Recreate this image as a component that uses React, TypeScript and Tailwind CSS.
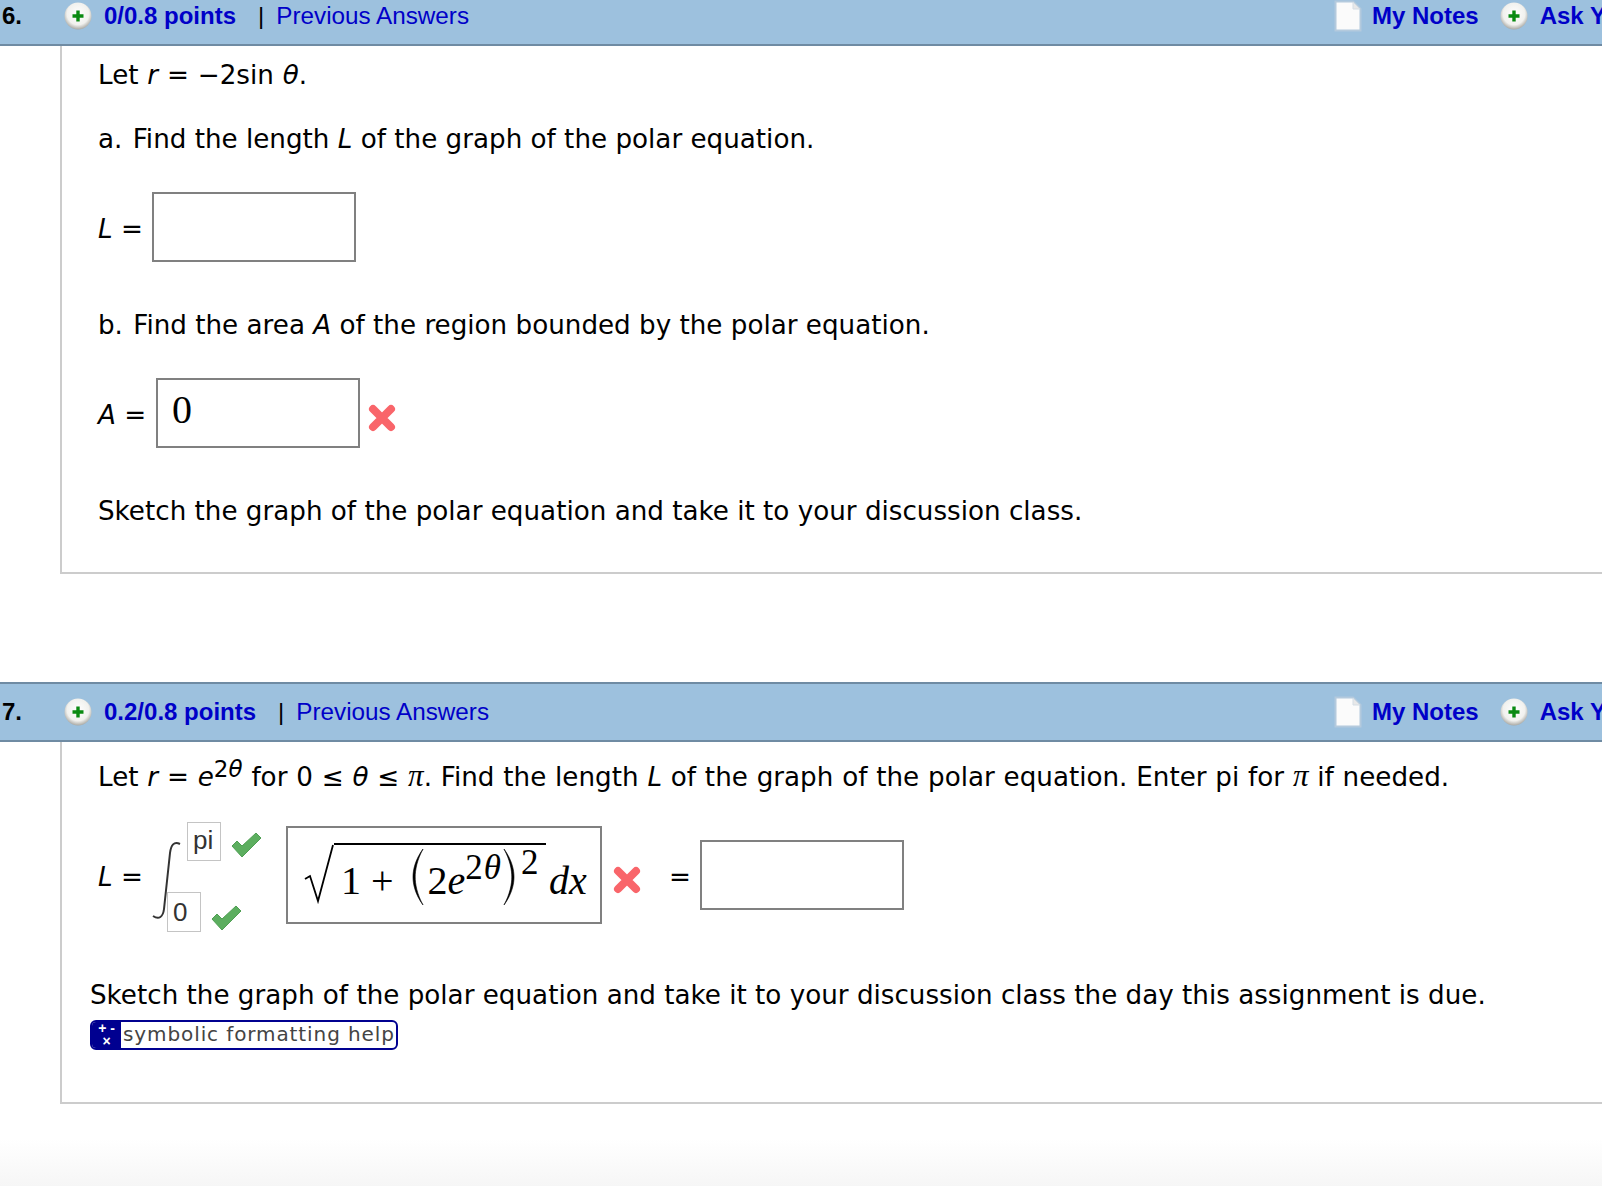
import React from "react";

const PlusBall = () => (
  <svg width="28" height="28" viewBox="0 0 28 28" className="shrink-0">
    <defs>
      <radialGradient id="ball" cx="50%" cy="42%" r="58%">
        <stop offset="0%" stopColor="#ffffff" />
        <stop offset="70%" stopColor="#f1f1ee" />
        <stop offset="100%" stopColor="#a9a9a4" />
      </radialGradient>
    </defs>
    <circle cx="14" cy="14" r="13.5" fill="url(#ball)" />
    <path d="M14 8.5v11M8.5 14h11" stroke="#0a8a12" strokeWidth="3.4" />
  </svg>
);

const NoteIcon = () => (
  <svg width="28" height="32" viewBox="0 0 28 32" className="shrink-0">
    <path d="M1.5 1.5H19L26.5 9V30.5H1.5Z" fill="#fbfbfb" stroke="#b4cadd" strokeWidth="2" />
    <path d="M19 2V9H26" fill="#e8e8e8" stroke="#d4dde5" strokeWidth="1" />
  </svg>
);

const Check = () => (
  <svg width="32" height="28" viewBox="0 0 32 28" className="shrink-0">
    <path d="M2 15L7 10L12 15L26 2L31 7L12 26Z" fill="#5cae5f" stroke="#4f9f53" strokeWidth="1" strokeLinejoin="round" />
  </svg>
);

const Cross = () => (
  <svg width="28" height="28" viewBox="0 0 28 28" className="shrink-0">
    <path d="M5 5L23 23M23 5L5 23" stroke="#f9656a" strokeWidth="8" strokeLinecap="round" />
  </svg>
);

const Header = ({ num, pts, cls, gap }: { num: string; pts: string; cls: string; gap: string }) => (
  <div className={`flex items-center bg-[#9dc1de] border-b-2 border-[#6f8ba3] font-['Liberation_Sans',sans-serif] text-[24px] leading-none overflow-hidden ${cls}`}>
    <b className="w-[64px] pl-[2px] text-black">{num}</b>
    <PlusBall />
    <b className="ml-[12px] text-[#0000c8]">{pts}</b>
    <span className={`text-black ${gap}`}>|</span>
    <span className="ml-[12px] text-[24.25px] text-[#0000c8]">Previous Answers</span>
    <div className="ml-auto flex items-center shrink-0 w-[268px] overflow-hidden whitespace-nowrap">
      <NoteIcon />
      <b className="ml-[10px] text-[#0000c8]">My Notes</b>
      <span className="ml-[21px]"><PlusBall /></span>
      <b className="ml-[12px] text-[#0000c8]">Ask Your Teacher</b>
    </div>
  </div>
);

const Box = ({ children, cls }: { children?: React.ReactNode; cls: string }) => (
  <div className={`border-2 border-[#808080] shrink-0 ${cls}`}>{children}</div>
);

const M = ({ children }: { children: React.ReactNode }) => <i className="font-['DejaVu_Sans',sans-serif]">{children}</i>;
const S = ({ children, cls = "" }: { children: React.ReactNode; cls?: string }) => (
  <span className={`font-['Liberation_Serif',serif] ${cls}`}>{children}</span>
);

const Paren = ({ flip = false }: { flip?: boolean }) => (
  <svg width="14" height="58" viewBox="0 0 14 58" className={`shrink-0 ${flip ? "-scale-x-100" : ""}`}>
    <path d="M12 1C4 12 2 22 2 29C2 36 4 46 12 57C6 46 4.2 36 4.2 29C4.2 22 6 12 12 1Z" fill="#000" stroke="#000" strokeWidth="0.6" />
  </svg>
);

export default function App() {
  return (
    <div className="w-[1602px] h-[1186px] overflow-hidden text-black font-['DejaVu_Sans',sans-serif] text-[26.2px] leading-[32px] bg-gradient-to-b from-white from-[96%] to-[#f6f6f6]">
      <Header num="6." pts="0/0.8 points" cls="h-[46px] pb-[12px]" gap="ml-[22px]" />
      <div className="ml-[60px] h-[528px] border-l-2 border-b-2 border-[#cccccc] pl-[36px] pt-[13px]">
        <p className="[word-spacing:0.5px]">Let <M>r</M> = −2sin <M>θ</M>.</p>
        <p className="mt-[32px]"><span className="mr-[2px]">a.</span> Find the length <M>L</M> of the graph of the polar equation.</p>
        <div className="mt-[37px] flex items-center h-[70px]">
          <span className="w-[54px] pt-[4px]"><M>L</M> =</span>
          <Box cls="w-[204px] h-[70px]" />
        </div>
        <p className="mt-[47px]"><span className="mr-[2px]">b.</span> Find the area <M>A</M> of the region bounded by the polar equation.</p>
        <div className="mt-[37px] flex items-center h-[70px]">
          <span className="w-[58px] pt-[4px]"><M>A</M> =</span>
          <Box cls="w-[204px] h-[70px] pl-[14px] pt-[4px]"><S cls="text-[40px] leading-[52px]">0</S></Box>
          <span className="ml-[8px] mt-[10px]"><Cross /></span>
        </div>
        <p className="mt-[47px]">Sketch the graph of the polar equation and take it to your discussion class.</p>
      </div>
      <div className="h-[108px]" />
      <div className="border-t-2 border-[#6f8ba3]">
        <Header num="7." pts="0.2/0.8 points" cls="h-[58px]" gap="ml-[22px]" />
      </div>
      <div className="ml-[60px] h-[362px] border-l-2 border-b-2 border-[#cccccc] pl-[36px] pt-[16px]">
        <p className="leading-[36px] whitespace-nowrap [word-spacing:0.5px]">
          Let <M>r</M> = <M>e</M>
          <sup className="text-[23px] leading-none top-[-9px]">2<M>θ</M></sup> for 0 ≤ <M>θ</M> ≤ <S cls="italic text-[31px]">π</S>. Find the length <M>L</M> of the graph of the polar equation. Enter pi for <S cls="italic text-[31px]">π</S> if needed.
        </p>
        <div className="mt-[31px] flex h-[114px]">
          <span className="w-[54px] pt-[35px]"><M>L</M> =</span>
          <div className="relative w-[134px]">
            <svg width="32" height="80" viewBox="0 0 32 80" className="absolute left-[-1px] top-[15px]">
              <path d="M29 3C23 0 20 4 19 12L13 68C12 76 8 79 2 75" fill="none" stroke="#333" strokeWidth="2" />
            </svg>
            <div className="absolute left-[35px] top-[-4px] w-[34px] h-[39px] border border-[#c4c4c4] pl-[5px] font-['Liberation_Sans',sans-serif] text-[26px] leading-[34px] text-[#333]">pi</div>
            <div className="absolute left-[78px] top-[5px]"><Check /></div>
            <div className="absolute left-[15px] top-[66px] w-[34px] h-[40px] border border-[#c4c4c4] pl-[5px] font-['Liberation_Sans',sans-serif] text-[26px] leading-[38px] text-[#333]">0</div>
            <div className="absolute left-[58px] top-[78px]"><Check /></div>
          </div>
          <Box cls="w-[316px] h-[98px] flex items-start pl-[16px] pt-[15px] font-['Liberation_Serif',serif] whitespace-nowrap text-[40px] leading-[60px]">
            <svg width="30" height="62" viewBox="0 0 30 62" className="shrink-0">
              <path d="M1 36L6 33L14 58L29 2" fill="none" stroke="#000" strokeWidth="1.8" />
            </svg>
            <div className="w-[212px] h-[60px] border-t-2 border-black flex items-baseline pl-[7px] pt-[6px]">
              <span>1</span>
              <span className="ml-[10px]">+</span>
              <span className="ml-[17px] -mt-[3px] flex self-start"><Paren /></span>
              <span className="ml-[3px]">2<i>e</i></span>
              <span className="relative top-[-15px] text-[35px] tracking-[1px] leading-none">2<i>θ</i></span>
              <span className="-mt-[3px] flex self-start"><Paren flip /></span>
              <span className="relative top-[-20px] ml-[5px] text-[35px] leading-none">2</span>
            </div>
            <i className="ml-[3px] pt-[8px]">dx</i>
          </Box>
          <span className="ml-[11px] mt-[40px]"><Cross /></span>
          <span className="ml-[28px] pt-[35px] w-[31px]">=</span>
          <Box cls="mt-[14px] w-[204px] h-[70px]" />
        </div>
        <div className="-ml-[8px] mt-[39px]">
          <p className="leading-[32px]">Sketch the graph of the polar equation and take it to your discussion class the day this assignment is due.</p>
          <div className="mt-[9px] w-[308px] h-[30px] flex rounded-[6px] border-2 border-[#000090] overflow-hidden bg-white">
            <div className="w-[29px] bg-[#000090] text-white font-['Liberation_Sans',sans-serif] font-bold text-[14px] leading-[13px] text-center shrink-0">+ -<br />×</div>
            <span className="pl-[2px] text-[#444] text-[20px] leading-[25px] tracking-[0.9px] whitespace-nowrap">symbolic formatting help</span>
          </div>
        </div>
      </div>
    </div>
  );
}
